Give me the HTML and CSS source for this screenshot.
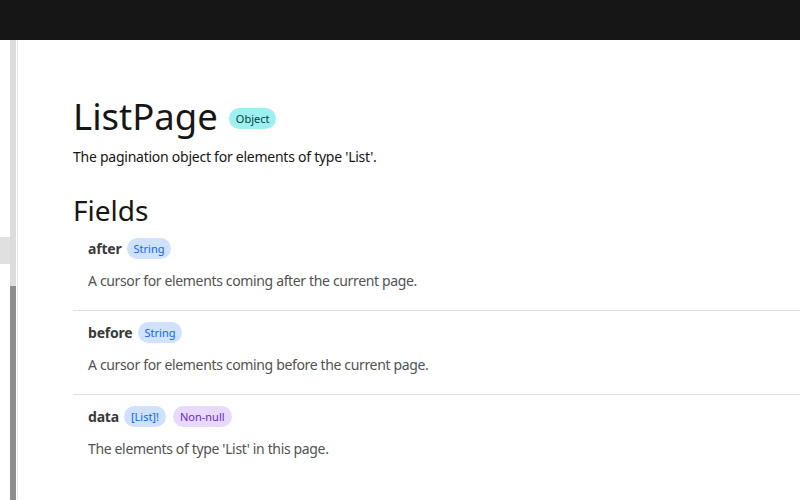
FILE: index.html
```html
<!DOCTYPE html>
<html>
<head>
<meta charset="utf-8">
<link rel="stylesheet" href="styles.css">
</head>
<body>
<header class="topbar"></header>
<div class="layout">
  <aside class="sidebar">
    <nav class="nav">
      <div class="nav-item active"></div>
    </nav>
    <div class="scroll-track"><div class="scroll-thumb"></div></div>
  </aside>
  <main class="content">
    <div class="title-row">
      <h1 class="title">ListPage</h1>
      <span class="badge badge-object">Object</span>
    </div>
    <p class="lead">The pagination object for elements of type 'List'.</p>
    <h2 class="section">Fields</h2>
    <div class="fields">
      <div class="field">
        <div class="field-head"><span class="field-name">after</span><span class="badge badge-type">String</span></div>
        <p class="field-desc">A cursor for elements coming after the current page.</p>
      </div>
      <div class="field">
        <div class="field-head"><span class="field-name">before</span><span class="badge badge-type">String</span></div>
        <p class="field-desc">A cursor for elements coming before the current page.</p>
      </div>
      <div class="field">
        <div class="field-head"><span class="field-name">data</span><span class="badge badge-type">[List]!</span><span class="badge badge-nonnull">Non-null</span></div>
        <p class="field-desc">The elements of type 'List' in this page.</p>
      </div>
    </div>
  </main>
</div>
</body>
</html>
```
FILE: styles.css
```css
* { box-sizing: border-box; }
html, body { margin: 0; padding: 0; height: 100%; }
body {
  font-family: "Noto Sans", "Open Sans", sans-serif;
  background: #ffffff;
  color: #161616;
  overflow: hidden;
}
.topbar {
  height: 40px;
  background: #161616;
}
.layout {
  display: flex;
  height: 460px;
}
.sidebar {
  width: 18px;
  display: flex;
  border-right: 1px solid #e8e8e8;
  flex: none;
}
.nav {
  width: 10px;
  display: flex;
  flex-direction: column;
  padding-top: 197px;
}
.nav-item.active {
  height: 27px;
  background: #e0e0e0;
}
.scroll-track {
  width: 6px;
  background: #dcdcdc;
  display: flex;
  flex-direction: column;
  padding-top: 246px;
}
.scroll-thumb {
  flex: 1;
  background: #8d8d8d;
}
.content {
  flex: 1;
  padding: 52px 0 0 55px;
}
.title-row {
  display: flex;
  align-items: center;
  gap: 11px;
}
.title {
  margin: 0;
  font-size: 36.5px;
  font-weight: 400;
  line-height: 48px;
  letter-spacing: 0;
}
.badge {
  display: inline-flex;
  align-items: center;
  height: 21px;
  padding: 0 7px;
  border-radius: 11px;
  font-size: 11px;
  line-height: 1;
}
.badge-object {
  background: #9ef0f0;
  color: #004144;
  margin-top: 4px;
}
.lead {
  margin: 7px 0 0;
  font-size: 14px;
  line-height: 20px;
  letter-spacing: -0.25px;
}
.section {
  margin: 25px 0 0;
  font-size: 28px;
  font-weight: 400;
  line-height: 36px;
}
.fields {
  margin-top: -1px;
}
.field {
  padding: 10px 0 19px 15px;
  border-bottom: 1px solid #e0e0e0;
}
.field:last-child { border-bottom: none; }
.field-head {
  display: flex;
  align-items: center;
  gap: 4px;
  height: 22px;
}
.field-name {
  font-weight: 700;
  font-size: 14px;
  color: #393939;
  letter-spacing: -0.2px;
  margin-right: 1px;
}
.badge-type {
  background: #d0e2ff;
  color: #0f62fe;
}
.badge-nonnull {
  background: #e8daff;
  color: #6929c4;
  margin-left: 3px;
}
.field-desc {
  margin: 12px 0 0;
  font-size: 14px;
  line-height: 20px;
  color: #525252;
  letter-spacing: -0.35px;
}
```
